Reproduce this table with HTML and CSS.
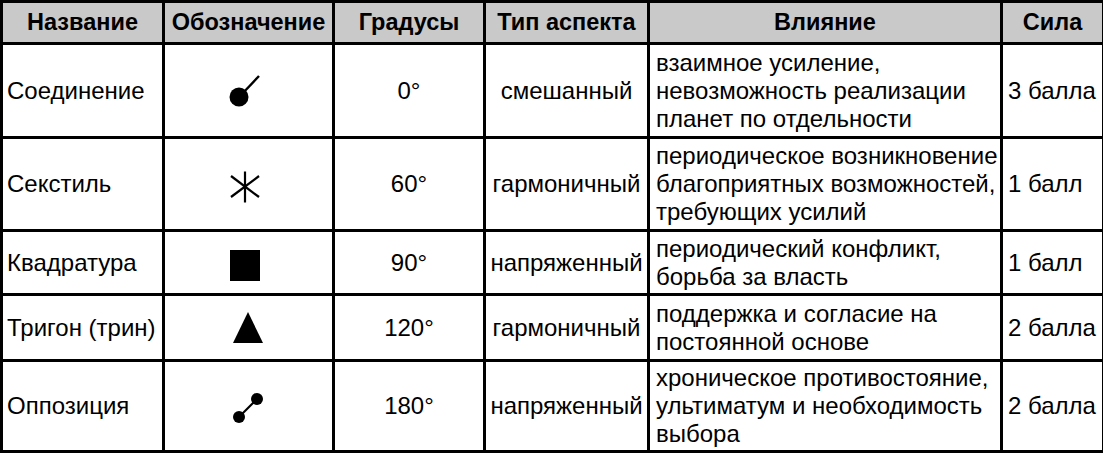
FILE: index.html
```html
<!DOCTYPE html>
<html lang="ru">
<head>
<meta charset="utf-8">
<link rel="stylesheet" href="styles.css">
</head>
<body>
<table class="aspects">
<colgroup>
<col class="c-name"><col class="c-sym"><col class="c-deg"><col class="c-type"><col class="c-eff"><col class="c-pow">
</colgroup>
<thead>
<tr class="head">
<th class="wide">Название</th>
<th class="wide">Обозначение</th>
<th>Градусы</th>
<th>Тип аспекта</th>
<th>Влияние</th>
<th>Сила</th>
</tr>
</thead>
<tbody>
<tr class="r1">
<td class="name">Соединение</td>
<td class="sym"><svg width="40" height="40" viewBox="0 0 40 40"><line x1="13" y1="23" x2="30" y2="5" stroke="#000" stroke-width="2.4"/><circle cx="10" cy="26" r="9.5" fill="#000"/></svg></td>
<td class="deg">0°</td>
<td class="type">смешанный</td>
<td class="eff">взаимное усиление,<br>невозможность реализации<br>планет по отдельности</td>
<td class="pow">3 балла</td>
</tr>
<tr class="r2">
<td class="name">Секстиль</td>
<td class="sym"><svg width="40" height="40" viewBox="0 0 40 40"><g stroke="#000" stroke-width="2.2"><line x1="16" y1="7.5" x2="16" y2="38.5"/><line x1="2" y1="12" x2="30" y2="33"/><line x1="30" y1="12" x2="2" y2="33"/></g></svg></td>
<td class="deg">60°</td>
<td class="type">гармоничный</td>
<td class="eff">периодическое возникновение<br>благоприятных возможностей,<br>требующих усилий</td>
<td class="pow">1 балл</td>
</tr>
<tr class="r3">
<td class="name">Квадратура</td>
<td class="sym"><svg width="40" height="40" viewBox="0 0 40 40"><rect x="1" y="7" width="30" height="31" fill="#000"/></svg></td>
<td class="deg">90°</td>
<td class="type">напряженный</td>
<td class="eff">периодический конфликт,<br>борьба за власть</td>
<td class="pow">1 балл</td>
</tr>
<tr class="r4">
<td class="name">Тригон (трин)</td>
<td class="sym"><svg width="40" height="40" viewBox="0 0 40 40"><polygon points="19,4 34,35 4,35" fill="#000"/></svg></td>
<td class="deg">120°</td>
<td class="type">гармоничный</td>
<td class="eff">поддержка и согласие на<br>постоянной основе</td>
<td class="pow">2 балла</td>
</tr>
<tr class="r5">
<td class="name">Оппозиция</td>
<td class="sym"><svg width="40" height="40" viewBox="0 0 40 40"><line x1="10" y1="31" x2="28" y2="13" stroke="#000" stroke-width="2.2"/><circle cx="10" cy="31" r="6" fill="#000"/><circle cx="28" cy="13" r="6" fill="#000"/></svg></td>
<td class="deg">180°</td>
<td class="type">напряженный</td>
<td class="eff">хроническое противостояние,<br>ультиматум и необходимость<br>выбора</td>
<td class="pow">2 балла</td>
</tr>
</tbody>
</table>
</body>
</html>
```

FILE: styles.css
```css
html, body {
  margin: 0;
  padding: 0;
  background: #fff;
}
.aspects {
  border-collapse: collapse;
  table-layout: fixed;
  width: 1102px;
  font-family: "Liberation Sans", Arial, sans-serif;
  font-size: 24px;
  color: #000;
}
.c-name { width: 162px; }
.c-sym { width: 170px; }
.c-deg { width: 151px; }
.c-type { width: 164px; }
.c-eff { width: 353px; }
.c-pow { width: 102px; }

.aspects th, .aspects td {
  border: 3px solid #000;
  padding: 0 4px;
  vertical-align: middle;
  white-space: nowrap;
  overflow: hidden;
}
.aspects th {
  background: #c9c9c9;
  font-weight: bold;
  font-size: 23.5px;
  text-align: center;
  height: 39px;
}
.r1 td { height: 91px; }
.r2 td { height: 90px; }
.r3 td { height: 61px; }
.r4 td { height: 63px; }
.r5 td { height: 88px; }

.name { text-align: left; }
.sym { text-align: center; }
.sym svg { display: block; margin: 0 auto; }
.deg { text-align: center; }
.type { text-align: center; }
.eff { text-align: left; line-height: 28px; }
.aspects td.eff { padding-left: 6px; }
.pow { text-align: left; }
.aspects td.pow { padding-left: 5px; }
```
